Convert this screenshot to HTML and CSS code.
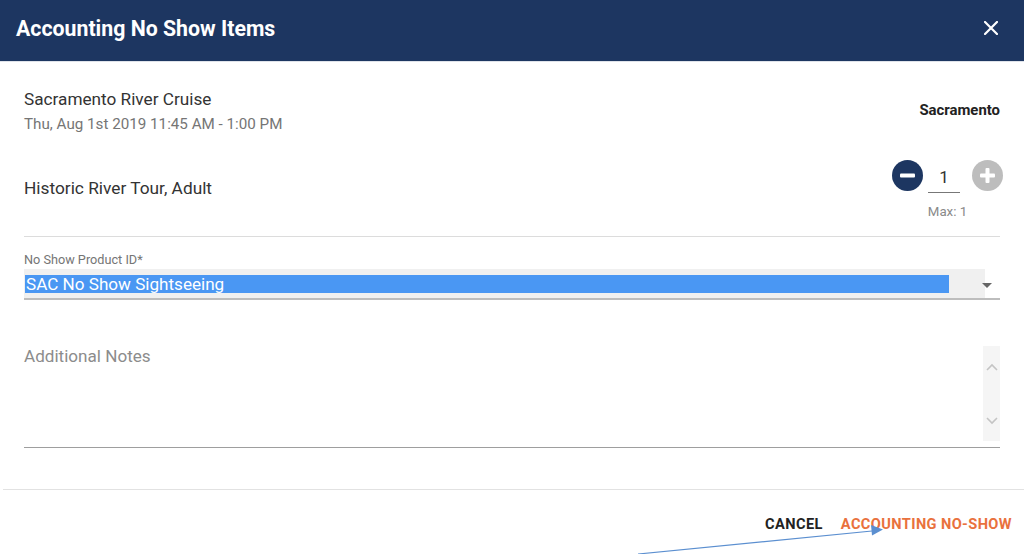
FILE: index.html
```html
<!DOCTYPE html>
<html lang="en">
<head>
<meta charset="utf-8">
<title>Accounting No Show Items</title>
<link rel="stylesheet" href="styles.css">
</head>
<body>
<div class="dialog">
  <header class="dlg-header">
    <h1 class="dlg-title">Accounting No Show Items</h1>
    <button class="close-btn" aria-label="Close">
      <svg width="14" height="14" viewBox="0 0 14 14"><path d="M1 1L13 13M13 1L1 13" stroke="#fff" stroke-width="2.2" stroke-linecap="square"/></svg>
    </button>
  </header>

  <section class="dlg-body">
    <div class="event-row">
      <div class="event-info">
        <div class="event-name">Sacramento River Cruise</div>
        <div class="event-date">Thu, Aug 1st 2019 11:45 AM - 1:00 PM</div>
      </div>
      <div class="event-location">Sacramento</div>
    </div>

    <div class="item-row">
      <div class="item-name">Historic River Tour, Adult</div>
      <div class="counter">
        <div class="counter-controls">
          <span class="circle-btn minus">
            <svg width="31" height="31" viewBox="0 0 31 31"><circle cx="15.5" cy="15.5" r="15.5" fill="#1d3661"/><rect x="8" y="13.5" width="15" height="4" rx="1" fill="#fff"/></svg>
          </span>
          <span class="qty">1</span>
          <span class="circle-btn plus">
            <svg width="31" height="31" viewBox="0 0 31 31"><circle cx="15.5" cy="15.5" r="15.5" fill="#bdbdbd"/><rect x="8" y="13.5" width="15" height="4" rx="1" fill="#fff"/><rect x="13.5" y="8" width="4" height="15" rx="1" fill="#fff"/></svg>
          </span>
        </div>
        <div class="max">Max: 1</div>
      </div>
    </div>

    <div class="field select-field">
      <label class="field-label">No Show Product ID*</label>
      <div class="select-box">
        <div class="select-inner">
          <span class="selected-option">SAC No Show Sightseeing</span>
        </div>
        <span class="caret"></span>
      </div>
    </div>

    <div class="field notes-field">
      <div class="notes-box">
        <span class="placeholder">Additional Notes</span>
        <div class="scrollbar">
          <svg width="14" height="10" viewBox="0 0 14 10"><path d="M2 8L7 3L12 8" fill="none" stroke="#c4c4c4" stroke-width="1.6"/></svg>
          <svg width="14" height="10" viewBox="0 0 14 10"><path d="M2 2L7 7L12 2" fill="none" stroke="#c4c4c4" stroke-width="1.6"/></svg>
        </div>
      </div>
    </div>
  </section>

  <footer class="dlg-footer">
    <button class="btn btn-cancel">Cancel</button>
    <button class="btn btn-primary">Accounting No-Show</button>
  </footer>

  <svg class="annotation" width="1024" height="554" viewBox="0 0 1024 554">
    <line x1="638" y1="554" x2="872" y2="531" stroke="#5b8fd0" stroke-width="1.2"/>
    <polygon points="871,525 883,529.5 872,535.5" fill="#5b8fd0"/>
  </svg>
</div>
</body>
</html>
```

FILE: styles.css
```css
* { box-sizing: border-box; }
html, body { margin: 0; padding: 0; background: #fff; }
body {
  font-family: Roboto, "Liberation Sans", Arial, sans-serif;
  color: #333;
  width: 1024px;
  height: 554px;
  overflow: hidden;
}
.dialog {
  position: relative;
  width: 1024px;
  height: 554px;
}
.dlg-header {
  height: 62px;
  background: #1d3661;
  border-bottom: 1px solid #dfe3ea;
  display: flex;
  align-items: center;
  justify-content: space-between;
  padding: 0 26px 0 16px;
}
.dlg-title {
  margin: 0;
  color: #fff;
  font-size: 21.3px;
  font-weight: 700;
  line-height: 24px;
  padding-bottom: 4px;
}
.close-btn {
  background: none;
  border: 0;
  padding: 0;
  width: 14px;
  height: 14px;
  display: flex;
  margin-bottom: 5px;
}
.dlg-body {
  padding: 27px 24px 0 24px;
}
.event-row {
  display: flex;
  justify-content: space-between;
  align-items: center;
}
.event-name {
  font-size: 17.2px;
  line-height: 20px;
  color: #333;
}
.event-date {
  font-size: 15.2px;
  line-height: 20px;
  margin-top: 5px;
  color: #757575;
}
.event-location {
  font-size: 14.9px;
  font-weight: 700;
  color: #222;
  padding-bottom: 4px;
}
.item-row {
  display: flex;
  justify-content: space-between;
  align-items: center;
  margin-top: 26px;
  padding-bottom: 19px;
  border-bottom: 1px solid #dcdcdc;
}
.item-name {
  font-size: 17.3px;
  line-height: 20px;
  color: #333;
  padding-bottom: 2px;
}
.counter {
  display: flex;
  flex-direction: column;
  align-items: center;
  margin-right: -3px;
}
.counter-controls {
  display: flex;
  align-items: center;
}
.circle-btn {
  display: flex;
  width: 31px;
  height: 31px;
}
.qty {
  width: 32px;
  margin: 0 12px 0 5px;
  text-align: center;
  font-size: 17px;
  line-height: 20px;
  color: #333;
  border-bottom: 1px solid #777;
  padding: 0 0 5px;
  position: relative;
  top: 4px;
}
.max {
  font-size: 13.3px;
  color: #8a8a8a;
  line-height: 14px;
  margin-top: 14px;
  margin-bottom: -2px;
}
.field-label {
  display: block;
  font-size: 12.7px;
  line-height: 14px;
  color: #757575;
}
.select-field {
  margin-top: 16px;
}
.select-box {
  margin-top: 2px;
  height: 31px;
  display: flex;
  align-items: center;
  border-bottom: 2px solid #bdbdbd;
}
.select-inner {
  flex: 1;
  height: 29px;
  background: #f0f0f0;
  padding: 6px 36px 0 1px;
  margin-right: 15px;
}
.selected-option {
  display: block;
  height: 18px;
  background: #4a97f3;
  color: #fff;
  font-size: 17.1px;
  line-height: 18px;
  padding-left: 1px;
}
.caret {
  width: 0;
  height: 0;
  border-left: 5px solid transparent;
  border-right: 5px solid transparent;
  border-top: 5px solid #666;
  margin: 3px 8px 0 -18px;
}
.notes-field {
  margin-top: 46px;
}
.notes-box {
  height: 102px;
  display: flex;
  justify-content: space-between;
  align-items: flex-start;
  border-bottom: 1px solid #9e9e9e;
}
.placeholder {
  font-size: 17.1px;
  line-height: 20px;
  color: #8c8c8c;
}
.scrollbar {
  width: 17px;
  height: 95px;
  background: #f5f5f5;
  display: flex;
  flex-direction: column;
  justify-content: space-between;
  align-items: center;
  padding: 16px 0 15px;
  margin-top: 0;
}
.dlg-footer {
  margin: 41px 0 0 3px;
  border-top: 1px solid #e2e2e2;
  display: flex;
  justify-content: flex-end;
  align-items: center;
  padding: 26px 12px 0 0;
  gap: 18px;
}
.btn {
  background: none;
  border: 0;
  padding: 0;
  font-family: Roboto, "Liberation Sans", Arial, sans-serif;
  font-size: 14.6px;
  font-weight: 700;
  text-transform: uppercase;
  letter-spacing: 0.4px;
  line-height: 16px;
}
.btn-cancel { color: #222; }
.btn-primary { color: #e9713d; }
.annotation {
  position: absolute;
  left: 0;
  top: 0;
  pointer-events: none;
}
```
